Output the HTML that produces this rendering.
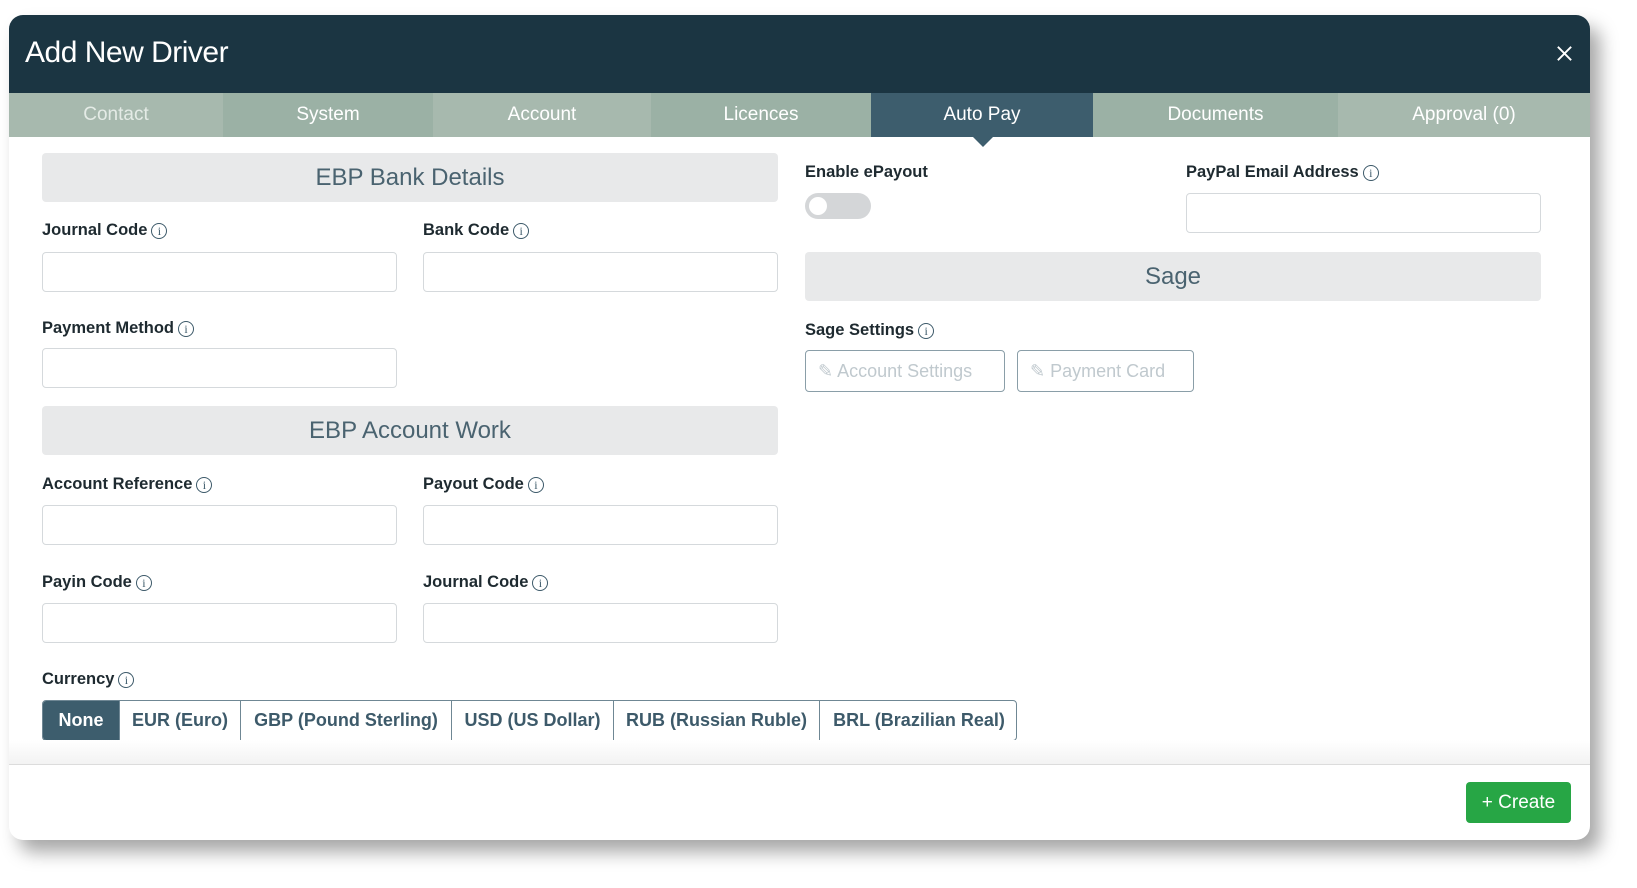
<!DOCTYPE html>
<html><head><style>
*{box-sizing:border-box;margin:0;padding:0}
body{width:1637px;height:888px;background:#fff;font-family:"Liberation Sans",sans-serif;position:relative;overflow:hidden}
.modal{position:absolute;left:9px;top:15px;width:1581px;height:825px;background:#fff;border-radius:14px;box-shadow:10px 12px 18px rgba(0,0,0,.35);overflow:hidden}
.hdr{position:absolute;left:0;top:0;width:100%;height:78px;background:#1b3542}
.hdr h1{position:absolute;left:16px;top:21px;font-size:30px;font-weight:normal;color:#fff;letter-spacing:-0.5px}
.close{position:absolute;left:1546px;top:29px;width:19px;height:19px}
.tabs{position:absolute;top:78px;left:0;height:44px;width:100%}
.tab{position:absolute;top:0;height:44px;color:#fff;font-size:19px;text-align:center;line-height:44px}
.a{position:absolute;font-size:16.5px;font-weight:bold;color:#1e2a30}
.i{display:inline-block;width:16px;height:16px;border:1.2px solid #3d5a6a;border-radius:50%;font-size:12px;font-weight:normal;color:#3d5a6a;text-align:center;line-height:14px;vertical-align:0px;margin-left:4px;font-family:"Liberation Serif",serif}
.in{position:absolute;border:1px solid #d5d9dc;border-radius:4px;height:40px;background:#fff}
.sec{position:absolute;background:#e8e9ea;border-radius:4px;color:#4a6370;font-size:24px;text-align:center;height:49px;line-height:49px}
.seg{position:absolute;top:0;height:41px;line-height:39px;font-size:18px;font-weight:bold;color:#3d5a6a;text-align:center;border-left:1px solid #6f8794}
.btn{position:absolute;border:1px solid #8a9ea8;border-radius:4px;height:42px;line-height:40px;font-size:18px;color:#c0c9ce;padding-left:12px}
</style></head><body>
<div class="modal">
<div class="hdr"><h1>Add New Driver</h1>
<svg class="close" viewBox="0 0 20 20"><path d="M3 3L17 17M17 3L3 17" stroke="#fff" stroke-width="2"/></svg></div>
<div class="tabs">
<div class="tab" style="left:0;width:214px;background:#a7b9ae;color:#e4ebe6">Contact</div>
<div class="tab" style="left:214px;width:210px;background:#9bb1a5">System</div>
<div class="tab" style="left:424px;width:218px;background:#a7b9ae">Account</div>
<div class="tab" style="left:642px;width:220px;background:#9bb1a5">Licences</div>
<div class="tab" style="left:862px;width:222px;background:#3d5d6d">Auto Pay</div>
<div class="tab" style="left:1084px;width:245px;background:#9bb1a5">Documents</div>
<div class="tab" style="left:1329px;width:252px;background:#a7b9ae">Approval (0)</div>
</div>
<div style="position:absolute;left:964px;top:122px;width:0;height:0;border-left:10px solid transparent;border-right:10px solid transparent;border-top:10px solid #3d5d6d"></div>

<div class="sec" style="left:33px;top:138px;width:736px">EBP Bank Details</div>
<div class="a" style="left:33px;top:206px">Journal Code<span class="i">i</span></div>
<div class="a" style="left:414px;top:206px">Bank Code<span class="i">i</span></div>
<div class="in" style="left:33px;top:237px;width:355px"></div>
<div class="in" style="left:414px;top:237px;width:355px"></div>
<div class="a" style="left:33px;top:304px">Payment Method<span class="i">i</span></div>
<div class="in" style="left:33px;top:333px;width:355px"></div>
<div class="sec" style="left:33px;top:391px;width:736px">EBP Account Work</div>
<div class="a" style="left:33px;top:460px">Account Reference<span class="i">i</span></div>
<div class="a" style="left:414px;top:460px">Payout Code<span class="i">i</span></div>
<div class="in" style="left:33px;top:490px;width:355px"></div>
<div class="in" style="left:414px;top:490px;width:355px"></div>
<div class="a" style="left:33px;top:558px">Payin Code<span class="i">i</span></div>
<div class="a" style="left:414px;top:558px">Journal Code<span class="i">i</span></div>
<div class="in" style="left:33px;top:588px;width:355px"></div>
<div class="in" style="left:414px;top:588px;width:355px"></div>
<div class="a" style="left:33px;top:655px">Currency<span class="i">i</span></div>
<div style="position:absolute;left:33px;top:685px;width:975px;height:41px;border:1px solid #6f8794;border-radius:4px;overflow:hidden">
<div class="seg" style="left:0;width:76px;background:#3d5d6d;color:#fff;border-left:none">None</div>
<div class="seg" style="left:76px;width:121px">EUR (Euro)</div>
<div class="seg" style="left:197px;width:211px">GBP (Pound Sterling)</div>
<div class="seg" style="left:408px;width:162px">USD (US Dollar)</div>
<div class="seg" style="left:570px;width:206px">RUB (Russian Ruble)</div>
<div class="seg" style="left:776px;width:199px">BRL (Brazilian Real)</div>
</div>

<div class="a" style="left:796px;top:148px">Enable ePayout</div>
<div style="position:absolute;left:796px;top:178px;width:66px;height:26px;border-radius:13px;background:#d4d6d8"><div style="position:absolute;left:4px;top:4px;width:18px;height:18px;border-radius:50%;background:#fff"></div></div>
<div class="a" style="left:1177px;top:148px">PayPal Email Address<span class="i">i</span></div>
<div class="in" style="left:1177px;top:178px;width:355px"></div>
<div class="sec" style="left:796px;top:237px;width:736px">Sage</div>
<div class="a" style="left:796px;top:306px">Sage Settings<span class="i">i</span></div>
<div class="btn" style="left:796px;top:335px;width:200px">✎ Account Settings</div>
<div class="btn" style="left:1008px;top:335px;width:177px">✎ Payment Card</div>

<div style="position:absolute;left:0;top:725px;width:100%;height:24px;background:linear-gradient(#fff,#f3f3f3)"></div>
<div style="position:absolute;left:0;top:749px;width:100%;height:1px;background:#dcdcdc"></div>
<div style="position:absolute;left:1457px;top:767px;width:105px;height:41px;border-radius:4px;background:#27a645;color:#fff;font-size:19px;line-height:41px;text-align:center">+ Create</div>
</div>
</body></html>
